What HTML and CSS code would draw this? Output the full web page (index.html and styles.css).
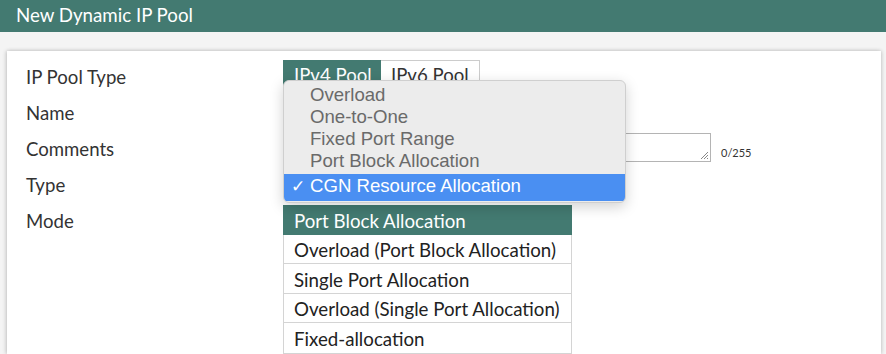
FILE: index.html
```html
<!DOCTYPE html>
<html>
<head>
<meta charset="utf-8">
<link rel="stylesheet" href="styles.css">
</head>
<body>
<div class="header">New Dynamic IP Pool</div>
<div class="page">
  <div class="card">
    <div class="row">
      <div class="label">IP Pool Type</div>
      <div class="field">
        <div class="toggle">
          <span class="tbtn active">IPv4 Pool</span><span class="tbtn">IPv6 Pool</span>
        </div>
      </div>
    </div>
    <div class="row">
      <div class="label">Name</div>
      <div class="field"><div class="input"></div></div>
    </div>
    <div class="row">
      <div class="label">Comments</div>
      <div class="field comments">
        <div class="textarea">
          <svg class="grip" width="10" height="10" viewBox="0 0 10 10"><path d="M9 2 L2 9 M9 5 L5 9 M9 8 L8 9" stroke="#888" stroke-width="1" fill="none"/></svg>
        </div>
        <span class="counter">0/255</span>
      </div>
    </div>
    <div class="row">
      <div class="label">Type</div>
      <div class="field"></div>
    </div>
    <div class="row">
      <div class="label">Mode</div>
      <div class="field">
        <div class="modelist">
          <div class="mode active">Port Block Allocation</div>
          <div class="mode">Overload (Port Block Allocation)</div>
          <div class="mode">Single Port Allocation</div>
          <div class="mode">Overload (Single Port Allocation)</div>
          <div class="mode">Fixed-allocation</div>
        </div>
      </div>
    </div>
  </div>
</div>
<div class="popup">
  <div class="opt">Overload</div>
  <div class="opt">One-to-One</div>
  <div class="opt">Fixed Port Range</div>
  <div class="opt">Port Block Allocation</div>
  <div class="opt sel"><span class="check">✓</span>CGN Resource Allocation</div>
</div>
</body>
</html>
```
FILE: styles.css
```css
html, body {
  margin: 0;
  padding: 0;
  background: #f4f4f4;
  font-family: Lato, "Open Sans", sans-serif;
  color: #333;
  overflow: hidden;
  height: 354px;
}
.header {
  height: 32px;
  background: #437a71;
  color: #fff;
  font-size: 18.7px;
  line-height: 31px;
  padding-left: 16px;
}
.page {
  padding: 19px 5px 0 7px;
}
.card {
  background: #fff;
  box-shadow: -1px 0 4px rgba(0,0,0,0.18), 1px 0 4px rgba(0,0,0,0.12);
  padding: 7px 0 0 19px;
  height: 296px;
  overflow: hidden;
}
.row {
  display: flex;
  min-height: 36px;
}
.label {
  width: 257px;
  font-size: 18.6px;
  line-height: 36px;
  padding-top: 1px;
  height: 35px;
  color: #333;
}
.field {
  flex: 1;
  display: flex;
  align-items: flex-start;
}
.toggle {
  display: flex;
  margin-top: 2px;
}
.tbtn {
  box-sizing: border-box;
  width: 98px;
  height: 30px;
  font-size: 18.6px;
  line-height: 28px;
  padding-left: 10px;
  border: 1px solid #ccc;
  background: #fff;
  color: #333;
  white-space: nowrap;
}
.tbtn.active {
  background: #437a71;
  border-color: #437a71;
  color: #fff;
}
.tbtn + .tbtn {
  width: 99px;
  border-left: none;
}
.input {
  width: 320px;
  height: 26px;
  border: 1px solid #aaa;
  margin-top: 5px;
}
.textarea {
  position: relative;
  box-sizing: border-box;
  width: 428px;
  height: 29px;
  border: 1px solid #b4b4b4;
  margin-top: 3px;
}
.grip {
  position: absolute;
  right: 1px;
  bottom: 1px;
}
.counter {
  font-size: 11px;
  margin-left: 10px;
  margin-top: 16px;
  color: #333;
}
.modelist {
  margin-top: 3px;
  width: 289px;
  border: 1px solid #d4d4d4;
  border-top: none;
  box-sizing: border-box;
}
.mode {
  height: 29.5px;
  box-sizing: border-box;
  border-bottom: 1px solid #d4d4d4;
  font-size: 18.7px;
  line-height: 29px;
  padding-top: 1.5px;
  padding-left: 10px;
  color: #222;
  white-space: nowrap;
  overflow: hidden;
}
.mode:last-child {
  border-bottom: none;
}
.mode.active {
  background: #437a71;
  color: #fff;
  border-bottom-color: #437a71;
  margin: 0 -1px;
  padding-left: 11px;
}
.popup {
  position: absolute;
  left: 283px;
  top: 80px;
  width: 343px;
  height: 123px;
  box-sizing: border-box;
  background: #ececec;
  border: 1px solid #cfcfcf;
  border-radius: 6px;
  box-shadow: 0 4px 14px rgba(0,0,0,0.18);
  padding-top: 3px;
  font-family: "Liberation Sans", Arial, sans-serif;
  overflow: hidden;
}
.opt {
  height: 22px;
  line-height: 22px;
  font-size: 18.6px;
  color: #6a6a6a;
  padding-left: 26px;
  white-space: nowrap;
}
.opt.sel {
  position: relative;
  background: #4a8ff2;
  color: #fff;
  height: 27px;
  line-height: 24px;
  margin-top: 2px;
}
.check {
  position: absolute;
  left: 7px;
  top: 0;
  font-size: 17px;
  font-weight: bold;
  font-family: "DejaVu Sans", sans-serif;
}
```
